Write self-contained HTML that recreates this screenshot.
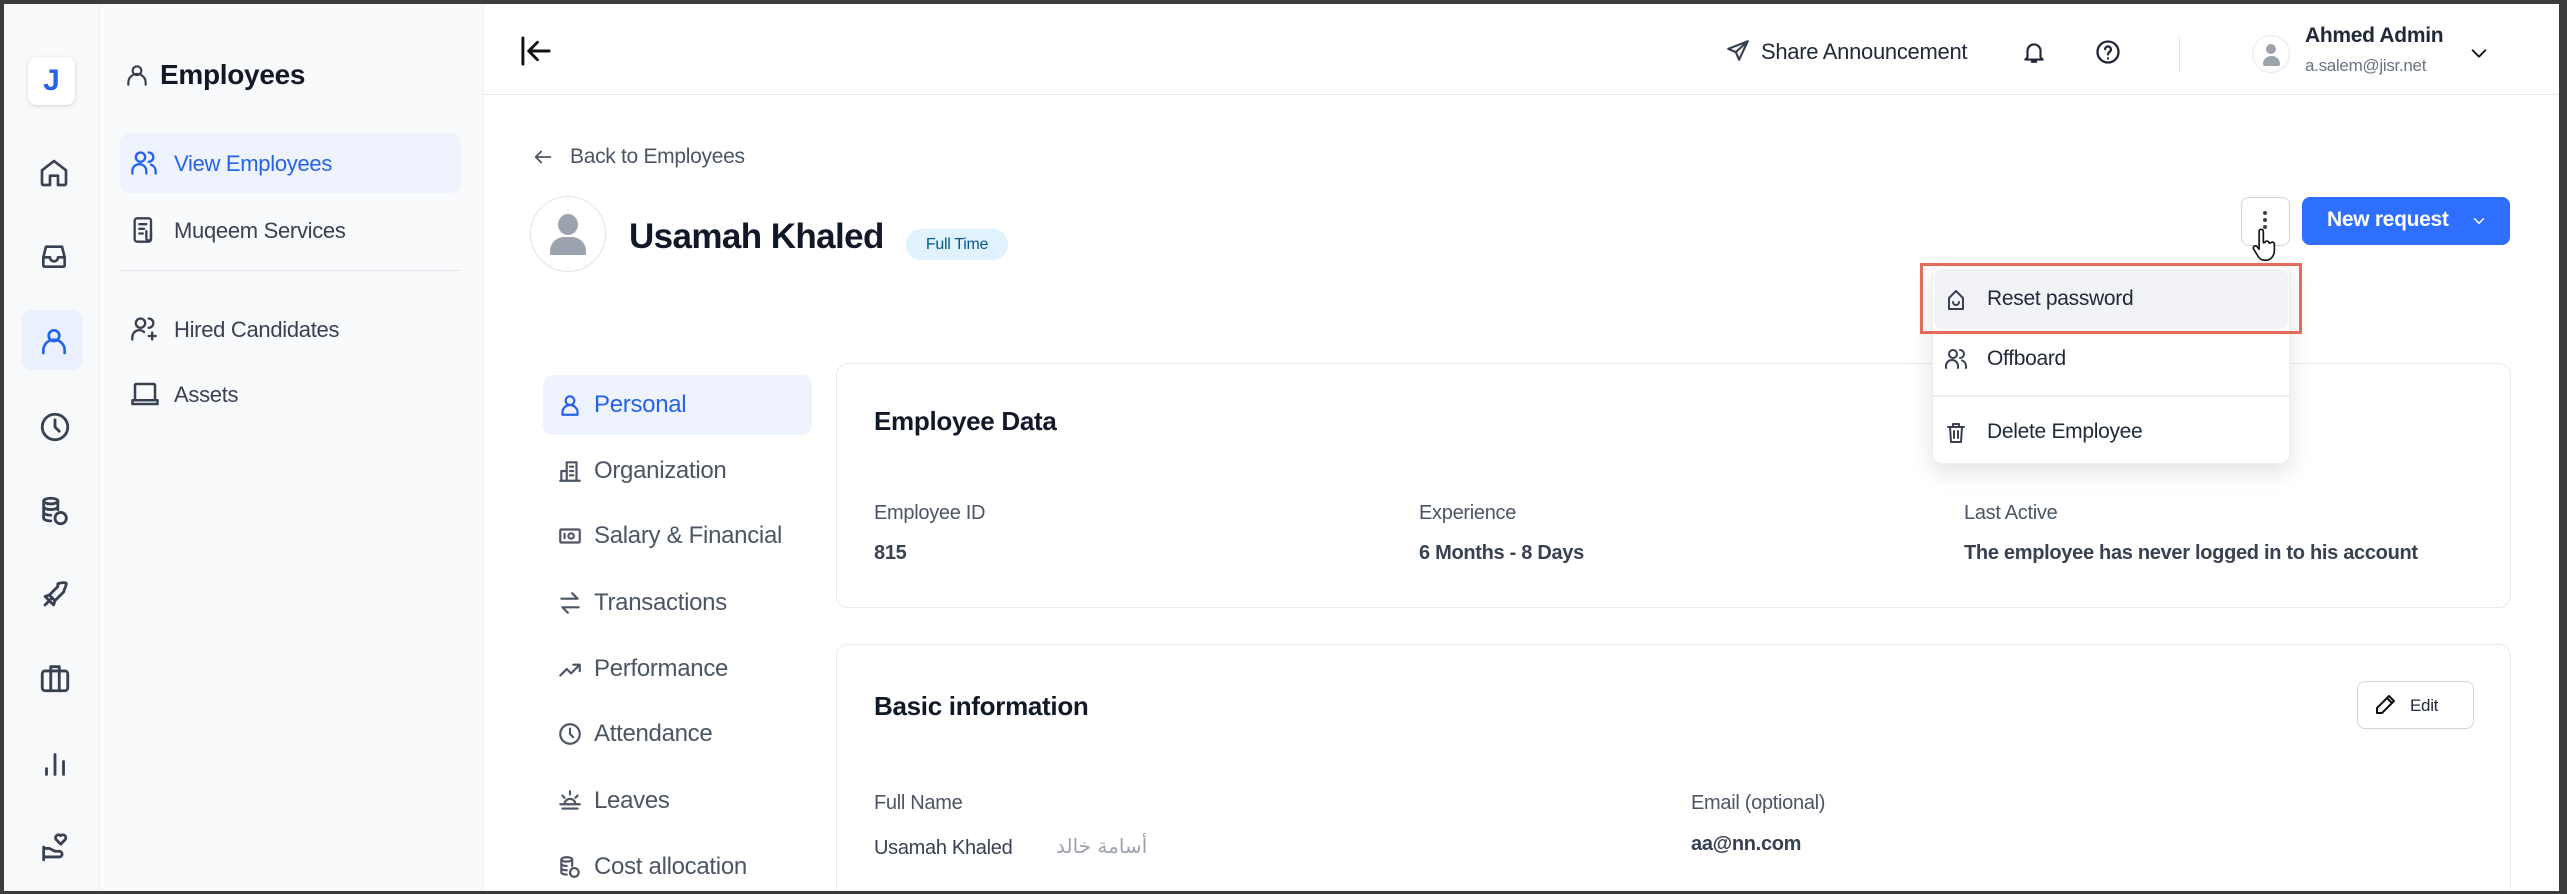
<!DOCTYPE html>
<html><head><meta charset="utf-8"><style>
*{box-sizing:border-box;margin:0;padding:0}
html,body{width:2567px;height:894px;overflow:hidden}
body{background:#3c3c3c;font-family:"Liberation Sans","Noto Sans CJK SC",sans-serif;position:relative;color:#111827}
.a{position:absolute}
.frame{position:absolute;left:4px;top:4px;width:2555px;height:887px;background:#fff;overflow:hidden}
svg{fill:none;stroke:currentColor;stroke-width:2;stroke-linecap:round;stroke-linejoin:round}
.t{white-space:nowrap;letter-spacing:-0.3px}
</style></head><body>
<div class="frame">
<div class="a" style="left:0;top:0;width:96px;height:887px;background:#f8f9fb;border-right:1px solid #eceef1"></div>
<div class="a" style="left:24px;top:53px;width:47px;height:48px;background:#fff;border-radius:9px;box-shadow:0 1px 4px rgba(0,0,0,.15);color:#2563eb;font-weight:bold;font-size:30px;text-align:center;line-height:48px">J</div>
<div class="a" style="left:18px;top:306px;width:60px;height:60px;background:#eaf0fd;border-radius:10px"></div>
<div class="a" style="left:32px;top:0;color:#374151">
<svg class="a" style="left:2px;top:152px" width="32" height="34" viewBox="0 0 24 24"><path d="M3 10l9-7 9 7v10a1 1 0 01-1 1h-5v-7h-6v7H4a1 1 0 01-1-1z"/></svg>
<svg class="a" style="left:2px;top:236px" width="32" height="32" viewBox="0 0 24 24"><path d="M4 13l2-8h12l2 8v6a1 1 0 01-1 1H5a1 1 0 01-1-1z M4 13h5a3 3 0 006 0h5"/></svg>
<svg class="a" style="left:2px;top:320px;color:#2563eb" width="32" height="34" viewBox="0 0 24 24"><circle cx="12" cy="8" r="4"/><path d="M4 21v-2a6 6 0 0116 0v2"/></svg>
<svg class="a" style="left:2px;top:406px" width="34" height="34" viewBox="0 0 24 24"><circle cx="12" cy="12" r="9"/><path d="M12 7v5l3 3"/></svg>
<svg class="a" style="left:2px;top:490px" width="34" height="34" viewBox="0 0 24 24"><ellipse cx="9" cy="5" rx="5" ry="2"/><path d="M4 5v12c0 1 2 2 5 2M14 5v6M4 9c0 1 2 2 5 2s5-1 5-2M4 13c0 1 2 2 5 2"/><circle cx="16" cy="17" r="4"/></svg>
<svg class="a" style="left:2px;top:574px" width="34" height="34" viewBox="0 0 24 24"><path d="M5 19l4-4M14 4c3-1 6-1 6 0s-1 3-2 6l-6 6-4-4 6-6z M8 12l-3 1 2 2M12 16l-1 3-2-2"/></svg>
<svg class="a" style="left:2px;top:657px" width="34" height="34" viewBox="0 0 24 24"><rect x="3" y="7" width="18" height="14" rx="2"/><path d="M9 7V4h6v3M9 7v14M15 7v14"/></svg>
<svg class="a" style="left:2px;top:742px" width="34" height="34" viewBox="0 0 24 24"><path d="M6 20v-4M12 20V6M18 20v-9"/></svg>
<svg class="a" style="left:2px;top:826px" width="34" height="34" viewBox="0 0 24 24"><path d="M4 13h4l4 2h3a2 2 0 010 4H4z M4 12v9M16 4a2 2 0 013 3l-3 3-3-3a2 2 0 013-3z"/></svg>
</div>
<div class="a" style="left:96px;top:0;width:384px;height:887px;background:#f9fafb;border-right:1px solid #eceef1"></div>
<svg class="a" style="left:120px;top:57px;color:#374151" width="26" height="28" viewBox="0 0 24 24"><circle cx="12" cy="8" r="4"/><path d="M4 21v-2a6 6 0 0116 0v2"/></svg>
<div class="a t" style="left:156px;top:55px;font-size:28px;font-weight:600;color:#111827">Employees</div>
<div class="a" style="left:116px;top:129px;width:341px;height:60px;background:#eef3fd;border-radius:10px"></div>
<svg class="a" style="left:126px;top:145px;color:#2563eb" width="28" height="28" viewBox="0 0 24 24"><circle cx="9" cy="7" r="4"/><path d="M2 21v-2a6 6 0 0112 0v2M16 3a4 4 0 010 8M22 21v-2a6 6 0 00-4-5.6"/></svg>
<div class="a t" style="left:170px;top:147px;font-size:22px;color:#2563eb">View Employees</div>
<svg class="a" style="left:126px;top:211px;color:#374151" width="28" height="30" viewBox="0 0 24 24"><rect x="4" y="2" width="14" height="20" rx="2"/><path d="M8 7h6M8 11h4M8 15h3M14 13v6a2 2 0 004 0v-5"/></svg>
<div class="a t" style="left:170px;top:214px;font-size:22px;color:#374151">Muqeem Services</div>
<div class="a" style="left:116px;top:266px;width:341px;height:1px;background:#e5e7eb"></div>
<svg class="a" style="left:126px;top:310px;color:#374151" width="28" height="30" viewBox="0 0 24 24"><circle cx="9" cy="7" r="4"/><path d="M2 21v-2a6 6 0 0110-4.5M16 3a4 4 0 010 8M19 15v6M16 18h6"/></svg>
<div class="a t" style="left:170px;top:313px;font-size:22px;color:#374151">Hired Candidates</div>
<svg class="a" style="left:126px;top:375px;color:#374151" width="30" height="30" viewBox="0 0 24 24"><rect x="4" y="4" width="16" height="13" rx="1"/><path d="M2 20h20v-3H2z"/></svg>
<div class="a t" style="left:170px;top:378px;font-size:22px;color:#374151">Assets</div>
<div class="a" style="left:480px;top:90px;width:2075px;height:1px;background:#e8eaee"></div>
<svg class="a" style="left:514px;top:31px;color:#111" width="36" height="32" viewBox="0 0 24 22"><path d="M3 2v18M21 11H7M13 5l-6 6 6 6"/></svg>
<svg class="a" style="left:1721px;top:34px;color:#374151" width="26" height="26" viewBox="0 0 24 24"><path d="M21 3L3 10l7 3 3 7z M10 13l11-10"/></svg>
<div class="a t" style="left:1757px;top:35px;font-size:22px;color:#1f2937">Share Announcement</div>
<svg class="a" style="left:2017px;top:34px;color:#1f2937" width="26" height="28" viewBox="0 0 24 24"><path d="M6 17V11a6 6 0 0112 0v6l2 2H4z M10 21h4"/></svg>
<svg class="a" style="left:2090px;top:34px;color:#1f2937" width="28" height="28" viewBox="0 0 24 24"><circle cx="12" cy="12" r="9"/><path d="M9.5 9.5a2.5 2.5 0 015 .5c0 2-2.5 2-2.5 4M12 17.5v.1"/></svg>
<div class="a" style="left:2175px;top:32px;width:1px;height:36px;background:#e5e7eb"></div>
<div class="a" style="left:2248px;top:31px;width:38px;height:38px;border-radius:50%;border:1px solid #e5e7eb;background:#fff;overflow:hidden">
<div class="a" style="left:13px;top:8px;width:10px;height:10px;border-radius:50%;background:#9ca3af"></div>
<div class="a" style="left:10px;top:20px;width:17px;height:10px;border-radius:8px 8px 2px 2px;background:#9ca3af"></div></div>
<div class="a t" style="left:2301px;top:20px;font-size:21px;font-weight:600;color:#1f2937">Ahmed Admin</div>
<div class="a t" style="left:2301px;top:52px;font-size:17px;color:#6b7280">a.salem@jisr.net</div>
<svg class="a" style="left:2463px;top:38px;color:#111" width="24" height="22" viewBox="0 0 24 24"><path d="M5 9l7 7 7-7"/></svg>
<svg class="a" style="left:528px;top:142px;color:#4b5563" width="22" height="22" viewBox="0 0 24 24"><path d="M20 12H4M10 6l-6 6 6 6"/></svg>
<div class="a t" style="left:566px;top:141px;font-size:21px;color:#4b5563">Back to Employees</div>
<div class="a" style="left:526px;top:192px;width:76px;height:76px;border-radius:50%;border:1.5px solid #e1e4e8;background:#fff">
<div class="a" style="left:27px;top:17px;width:20px;height:21px;border-radius:50%;background:#9ca3af"></div>
<div class="a" style="left:19px;top:40px;width:36px;height:18px;border-radius:14px 14px 1px 1px;background:#9ca3af"></div></div>
<div class="a t" style="left:625px;top:213px;font-size:35px;font-weight:600;color:#111827;letter-spacing:-0.6px">Usamah Khaled</div>
<div class="a t" style="left:902px;top:225px;width:102px;height:31px;border-radius:16px;background:#e0f2fe;color:#075985;font-size:16px;text-align:center;line-height:31px">Full Time</div>
<div class="a" style="left:2237px;top:193px;width:49px;height:49px;border:1px solid #d1d5db;border-radius:8px;background:#fff"></div>
<div class="a" style="left:2259px;top:207px;width:4px;height:4px;border-radius:50%;background:#374151;box-shadow:0 7px 0 #374151,0 14px 0 #374151"></div>
<svg class="a" style="left:2247px;top:224px" width="26" height="36" viewBox="0 0 16 22"><path d="M5 2a1.3 1.3 0 012.6 0v7l1-.2a1.3 1.3 0 012.5.4l1-.1a1.3 1.3 0 012.3.6v4c0 3-2 6-5 6H8c-2 0-3-1-4-3l-2.5-4a1.3 1.3 0 012-1.5L5 13z" fill="#fff" stroke="#111" stroke-width="1"/></svg>
<div class="a" style="left:2298px;top:193px;width:208px;height:48px;border-radius:8px;background:#2f6fff"></div>
<div class="a t" style="left:2323px;top:204px;font-size:21px;font-weight:600;color:#fff">New request</div>
<svg class="a" style="left:2466px;top:208px;color:#fff" width="18" height="18" viewBox="0 0 24 24"><path d="M6 9l6 6 6-6"/></svg>
<div class="a" style="left:539px;top:371px;width:269px;height:60px;background:#eef3fd;border-radius:10px"></div>
<div class="a" style="left:553px;top:0;color:#4b5563">
<svg class="a" style="top:387px;color:#2563eb" width="26" height="28" viewBox="0 0 24 24"><circle cx="12" cy="8" r="4"/><path d="M5 21v-2a6 6 0 0114 0v2z"/></svg>
<svg class="a" style="top:453px" width="26" height="28" viewBox="0 0 24 24"><path d="M3 21h18M4 21v-9h5M9 21V4h9v17M12 8h3M12 12h3M12 16h3"/></svg>
<svg class="a" style="top:518px" width="26" height="28" viewBox="0 0 24 24"><rect x="3" y="6" width="18" height="12" rx="1"/><circle cx="13" cy="12" r="2.5"/><path d="M7 10v4"/></svg>
<svg class="a" style="top:585px" width="26" height="28" viewBox="0 0 24 24"><path d="M4 8h15M14 3l5 5M20 16H5M10 21l-5-5"/></svg>
<svg class="a" style="top:651px" width="26" height="28" viewBox="0 0 24 24"><path d="M3 18l6-6 4 4 8-8M15 8h6v6"/></svg>
<svg class="a" style="top:716px" width="26" height="28" viewBox="0 0 24 24"><circle cx="12" cy="12" r="9"/><path d="M12 7v5l3 3"/></svg>
<svg class="a" style="top:783px" width="26" height="28" viewBox="0 0 24 24"><path d="M12 3v3M5 7l2 2M19 7l-2 2M7 15a5 5 0 0110 0M3 15h18M5 19h14"/></svg>
<svg class="a" style="top:849px" width="26" height="28" viewBox="0 0 24 24"><ellipse cx="9" cy="5" rx="5" ry="2"/><path d="M4 5v12c0 1 2 2 5 2M14 5v6M4 9c0 1 2 2 5 2M4 13c0 1 2 2 5 2"/><circle cx="16" cy="17" r="4"/></svg>
</div>
<div class="a t" style="left:590px;top:387px;font-size:24px;color:#2563eb">Personal</div>
<div class="a t" style="left:590px;top:453px;font-size:24px;color:#4b5563">Organization</div>
<div class="a t" style="left:590px;top:518px;font-size:24px;color:#4b5563">Salary &amp; Financial</div>
<div class="a t" style="left:590px;top:585px;font-size:24px;color:#4b5563">Transactions</div>
<div class="a t" style="left:590px;top:651px;font-size:24px;color:#4b5563">Performance</div>
<div class="a t" style="left:590px;top:716px;font-size:24px;color:#4b5563">Attendance</div>
<div class="a t" style="left:590px;top:783px;font-size:24px;color:#4b5563">Leaves</div>
<div class="a t" style="left:590px;top:849px;font-size:24px;color:#4b5563">Cost allocation</div>
<div class="a" style="left:832px;top:359px;width:1675px;height:245px;border:1.5px solid #e8eaee;border-radius:12px;background:#fff"></div>
<div class="a t" style="left:870px;top:402px;font-size:26px;font-weight:600;color:#111827">Employee Data</div>
<div class="a t" style="left:870px;top:498px;font-size:20px;color:#4b5563">Employee ID</div>
<div class="a t" style="left:870px;top:538px;font-size:20px;font-weight:600;color:#374151">815</div>
<div class="a t" style="left:1415px;top:498px;font-size:20px;color:#4b5563">Experience</div>
<div class="a t" style="left:1415px;top:538px;font-size:20px;font-weight:600;color:#374151">6 Months - 8 Days</div>
<div class="a t" style="left:1960px;top:498px;font-size:20px;color:#4b5563">Last Active</div>
<div class="a t" style="left:1960px;top:538px;font-size:20px;font-weight:600;color:#374151">The employee has never logged in to his account</div>
<div class="a" style="left:832px;top:640px;width:1675px;height:247px;border:1.5px solid #e8eaee;border-bottom:none;border-radius:12px 12px 0 0;background:#fff"></div>
<div class="a t" style="left:870px;top:687px;font-size:26px;font-weight:600;color:#111827">Basic information</div>
<div class="a" style="left:2353px;top:677px;width:117px;height:48px;border:1px solid #d1d5db;border-radius:8px;background:#fff"></div>
<svg class="a" style="left:2369px;top:689px;color:#111" width="24" height="24" viewBox="0 0 24 24"><path d="M16 3l5 5L9 20H4v-5z M14 5l5 5"/></svg>
<div class="a t" style="left:2406px;top:692px;font-size:17px;color:#1f2937">Edit</div>
<div class="a t" style="left:870px;top:788px;font-size:20px;color:#4b5563">Full Name</div>
<div class="a t" style="left:870px;top:833px;font-size:20px;color:#374151">Usamah Khaled</div>
<div class="a t" style="left:1052px;top:830px;font-size:20px;color:#9ca3af;font-family:'DejaVu Sans',sans-serif">أسامة خالد</div>
<div class="a t" style="left:1687px;top:788px;font-size:20px;color:#4b5563">Email (optional)</div>
<div class="a t" style="left:1687px;top:829px;font-size:20px;font-weight:600;color:#374151">aa@nn.com</div>
<div class="a" style="left:1928px;top:261px;width:358px;height:199px;background:#fff;border:1px solid #eceef1;border-radius:10px;box-shadow:0 8px 24px rgba(0,0,0,.12)"></div>
<div class="a" style="left:1930px;top:265px;width:354px;height:60px;background:#f2f3f6;border-radius:8px"></div>
<div class="a" style="left:1916px;top:259px;width:382px;height:71px;border:3px solid #e46a5b"></div>
<svg class="a" style="left:1940px;top:283px;color:#374151" width="24" height="26" viewBox="0 0 24 24"><path d="M5 21V10l7-7 7 7v11z M9 14a3 3 0 006 0"/></svg>
<div class="a t" style="left:1983px;top:283px;font-size:21px;color:#1f2937">Reset password</div>
<svg class="a" style="left:1940px;top:342px;color:#374151" width="24" height="26" viewBox="0 0 24 24"><circle cx="9" cy="7" r="4"/><path d="M2 21v-2a6 6 0 0112 0v2M16 3a4 4 0 010 8M22 21v-2a6 6 0 00-4-5.6"/></svg>
<div class="a t" style="left:1983px;top:343px;font-size:21px;color:#1f2937">Offboard</div>
<div class="a" style="left:1929px;top:391px;width:356px;height:2px;background:#eceef1"></div>
<svg class="a" style="left:1940px;top:416px;color:#374151" width="24" height="26" viewBox="0 0 24 24"><path d="M4 6h16M9 6V3h6v3M6 6l1 15h10l1-15M10 10v7M14 10v7"/></svg>
<div class="a t" style="left:1983px;top:416px;font-size:21px;color:#1f2937">Delete Employee</div>
</div>
</body></html>
